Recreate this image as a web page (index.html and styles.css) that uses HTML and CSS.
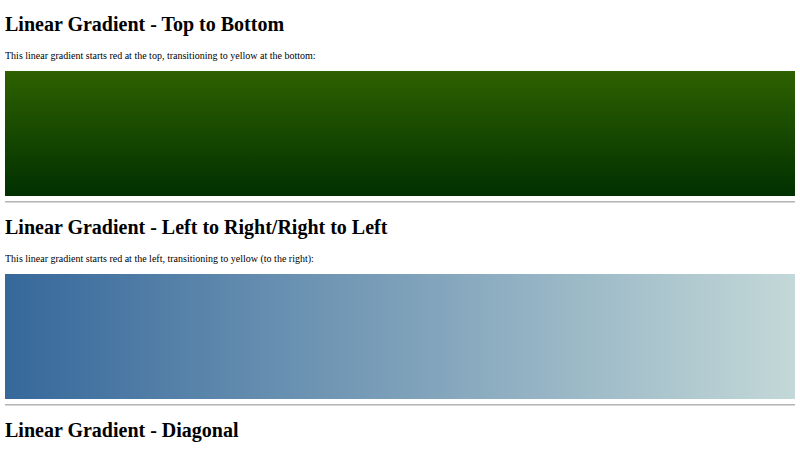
FILE: index.html
```html
<!DOCTYPE html>
<html>
<head>
<meta charset="utf-8">
<title>Linear Gradients</title>
<link rel="stylesheet" href="styles.css">
</head>
<body>
<h1 class="title">Linear Gradient - Top to Bottom</h1>
<p class="note">This linear gradient starts red at the top, transitioning to yellow at the bottom:</p>
<div class="swatch swatch-vertical"></div>
<hr class="rule">
<h1 class="title">Linear Gradient - Left to Right/Right to Left</h1>
<p class="note">This linear gradient starts red at the left, transitioning to yellow (to the right):</p>
<div class="swatch swatch-horizontal"></div>
<hr class="rule">
<h1 class="title">Linear Gradient - Diagonal</h1>
</body>
</html>
```
FILE: styles.css
```css
html {
  font-size: 10px;
}

body {
  margin: 0 5px 5px;
  font-family: "Liberation Serif", "Times New Roman", serif;
  font-size: 1rem;
  color: #000;
  background: #fff;
}

.title {
  font-size: 2em;
  font-weight: bold;
  margin: 0.67em 0;
}

.note {
  font-size: 1em;
  margin: 1em 0;
}

.swatch {
  height: 125px;
}

/* green fading darker toward the bottom */
.swatch-vertical {
  background: linear-gradient(to bottom, #2e6100, #003000);
}

/* steel blue fading to pale grey-blue on the right */
.swatch-horizontal {
  background: linear-gradient(to right, #36689b, #c3d8d8);
}

.rule {
  height: 0;
  margin: 0.5em 0;
  border: 0;
  border-top: 1px solid #b4b8b8;
  border-bottom: 1px solid #d4d6d6;
}
```
